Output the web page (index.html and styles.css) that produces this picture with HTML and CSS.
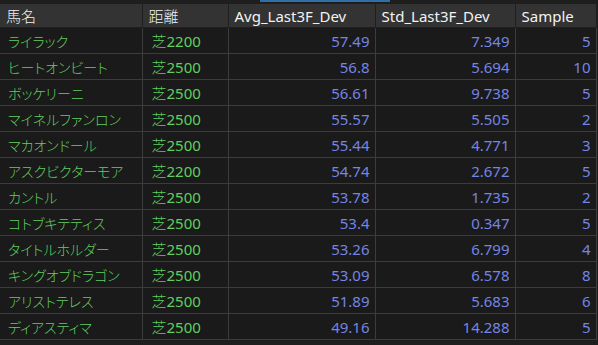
FILE: index.html
```html
<!DOCTYPE html>
<html lang="ja">

<head>
    <meta charset="UTF-8">
    <title>Last3F Dev</title>
    <link rel="stylesheet" href="styles.css">
</head>

<body>
    <div class="grid-wrap">
        <div class="top-strip"><span class="sel-bar"></span></div>
        <table class="grid">
            <colgroup>
                <col class="c-name">
                <col class="c-dist">
                <col class="c-avg">
                <col class="c-std">
                <col class="c-n">
            </colgroup>
            <thead>
                <tr>
                    <th class="jp">馬名</th>
                    <th class="jp">距離</th>
                    <th>Avg_Last3F_Dev</th>
                    <th>Std_Last3F_Dev</th>
                    <th>Sample</th>
                </tr>
            </thead>
            <tbody>
                <tr><td class="name">ライラック</td><td class="dist"><span class="turf">芝</span>2200</td><td class="num">57.49</td><td class="num">7.349</td><td class="num">5</td></tr>
                <tr><td class="name">ヒートオンビート</td><td class="dist"><span class="turf">芝</span>2500</td><td class="num">56.8</td><td class="num">5.694</td><td class="num">10</td></tr>
                <tr><td class="name">ボッケリーニ</td><td class="dist"><span class="turf">芝</span>2500</td><td class="num">56.61</td><td class="num">9.738</td><td class="num">5</td></tr>
                <tr><td class="name">マイネルファンロン</td><td class="dist"><span class="turf">芝</span>2500</td><td class="num">55.57</td><td class="num">5.505</td><td class="num">2</td></tr>
                <tr><td class="name">マカオンドール</td><td class="dist"><span class="turf">芝</span>2500</td><td class="num">55.44</td><td class="num">4.771</td><td class="num">3</td></tr>
                <tr><td class="name">アスクビクターモア</td><td class="dist"><span class="turf">芝</span>2200</td><td class="num">54.74</td><td class="num">2.672</td><td class="num">5</td></tr>
                <tr><td class="name">カントル</td><td class="dist"><span class="turf">芝</span>2500</td><td class="num">53.78</td><td class="num">1.735</td><td class="num">2</td></tr>
                <tr><td class="name">コトブキテティス</td><td class="dist"><span class="turf">芝</span>2500</td><td class="num">53.4</td><td class="num">0.347</td><td class="num">5</td></tr>
                <tr><td class="name">タイトルホルダー</td><td class="dist"><span class="turf">芝</span>2500</td><td class="num">53.26</td><td class="num">6.799</td><td class="num">4</td></tr>
                <tr><td class="name">キングオブドラゴン</td><td class="dist"><span class="turf">芝</span>2500</td><td class="num">53.09</td><td class="num">6.578</td><td class="num">8</td></tr>
                <tr><td class="name">アリストテレス</td><td class="dist"><span class="turf">芝</span>2500</td><td class="num">51.89</td><td class="num">5.683</td><td class="num">6</td></tr>
                <tr><td class="name">ディアスティマ</td><td class="dist"><span class="turf">芝</span>2500</td><td class="num">49.16</td><td class="num">14.288</td><td class="num">5</td></tr>
            </tbody>
        </table>
    </div>
</body>

</html>
```

FILE: styles.css
```css
html,
body {
    margin: 0;
    padding: 0;
    background-color: #1e1e1e;
}

body {
    width: 598px;
    height: 345px;
    overflow: hidden;
    font-family: "Noto Sans", "Noto Sans CJK JP", sans-serif;
    font-size: 15px;
}

.grid-wrap {
    width: 596px;
}

.top-strip {
    height: 4px;
    background-color: #1e1e1e;
    display: flex;
}

.sel-bar {
    margin-left: 260px;
    width: 130px;
    height: 2px;
    background-color: #2f6fa8;
}

.grid {
    border-collapse: collapse;
    table-layout: fixed;
    width: 596px;
}

.c-name { width: 142px; }
.c-dist { width: 86px; }
.c-avg { width: 147px; }
.c-std { width: 140px; }
.c-n { width: 81px; }

.grid th {
    height: 23px;
    padding: 0 6px;
    background-color: #333333;
    color: #f2f2f2;
    font-weight: normal;
    text-align: left;
    border-right: 1px solid #1f1f1f;
    border-bottom: 1px solid #1f1f1f;
    white-space: nowrap;
    overflow: hidden;
}

.grid th.jp {
    font-weight: 300;
}

.grid td {
    height: 25px;
    padding: 0 5px 0 9px;
    background-color: #1a1a1a;
    border: 1px solid #3c3c3c;
    border-top: none;
    border-left: none;
    white-space: nowrap;
    overflow: hidden;
}

.grid td.name {
    color: #5fcf5f;
    font-size: 14px;
    font-weight: 300;
    padding-left: 8px;
    font-feature-settings: "palt";
}

.grid td.dist {
    color: #5fcf5f;
}

.turf {
    font-weight: 300;
}

.grid td.num {
    color: #7485e3;
    text-align: right;
}
```
